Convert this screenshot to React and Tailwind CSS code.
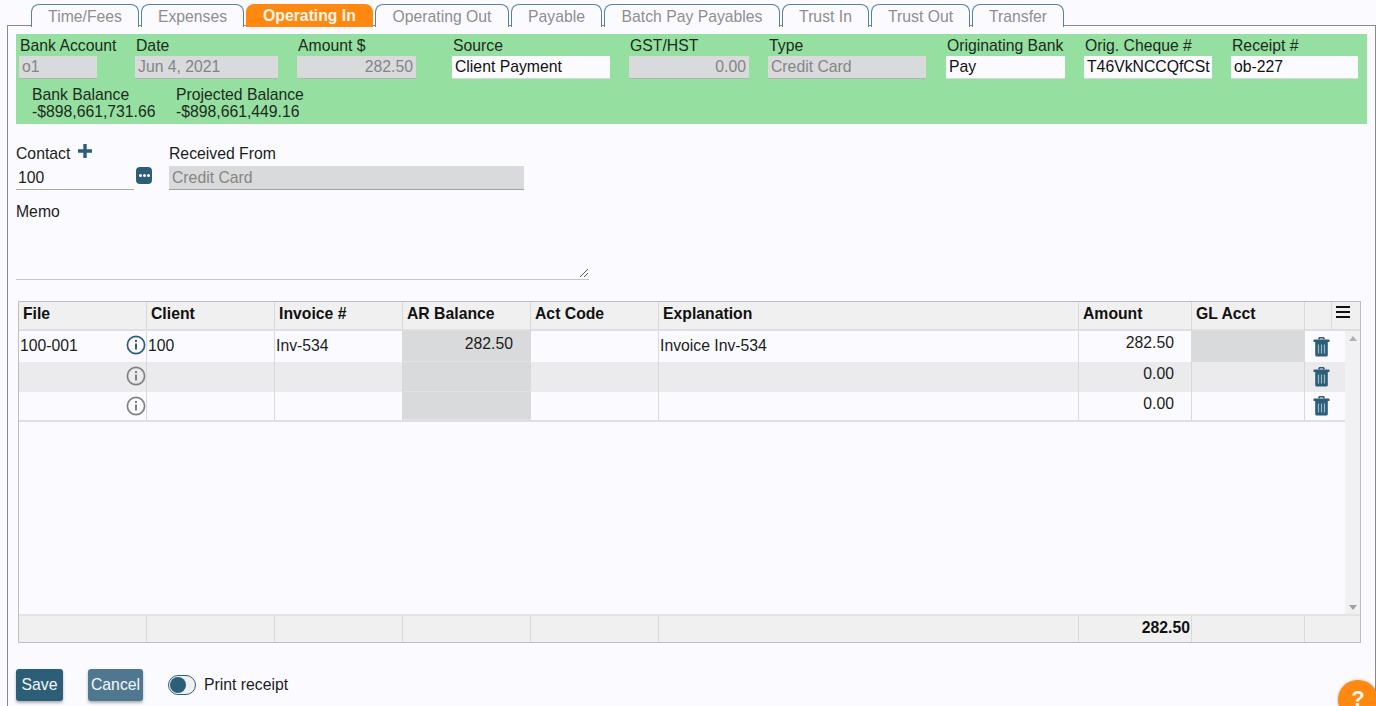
import React from "react";

const tabs = [
  ["Time/Fees", "w-[108px]"],
  ["Expenses", "w-[103px]"],
  ["Operating In", "w-[127px]"],
  ["Operating Out", "w-[134px]"],
  ["Payable", "w-[91px]"],
  ["Batch Pay Payables", "w-[176px]"],
  ["Trust In", "w-[87px]"],
  ["Trust Out", "w-[99px]"],
  ["Transfer", "w-[92px]"],
];

function Field({ label, value, wClass, mlClass, disabled, right }) {
  return (
    <div className={`flex flex-col shrink-0 ${wClass} ${mlClass}`}>
      <div className="h-[21px] pl-px text-[15.75px] leading-[21px] text-[#1c2b20] whitespace-nowrap">{label}</div>
      <div
        className={`h-[23px] pl-[3px] pr-[3px] text-[15.75px] leading-[22px] overflow-hidden whitespace-nowrap ${
          disabled
            ? "bg-[#d9dadb] text-[#858585] border-b border-[#b4b4b4]"
            : "bg-[#fbfbff] text-[#111] border-b border-[#d8d8d8]"
        } ${right ? "text-right" : ""}`}
      >
        {value}
      </div>
    </div>
  );
}

function InfoIcon({ active }) {
  return (
    <svg width="20" height="20" viewBox="0 0 20 20" fill="none" stroke={active ? "#2c5e78" : "#808080"} strokeWidth="1.7">
      <circle cx="10" cy="10" r="8.6" />
      <path d="M10 8.6v6" strokeWidth="2" />
      <path d="M10 5v2" strokeWidth="2" />
    </svg>
  );
}

function Trash() {
  return (
    <svg width="17" height="20" viewBox="0 0 17 20" fill="none">
      <path d="M5.8 2.4 6.5 .8h4l.7 1.6" stroke="#2c5e78" strokeWidth="1.6" />
      <rect x=".5" y="2.4" width="16" height="2.6" rx=".6" fill="#2c5e78" />
      <path d="M2.2 5h12.6v13a1.6 1.6 0 0 1-1.6 1.6H3.800a1.600 1.600 0 0 1-1.600-1.600z" fill="#2c5e78" />
      <path d="M5.500 7.500v9M8.500 7.500v9M11.500 7.500v9" stroke="#9fb8c6" strokeWidth="1.200" />
    </svg>
  );
}

const cols = "grid grid-cols-[128px_128px_128px_128px_128px_420px_113px_113px_1fr]";
const cellB = "border-r border-[#d9d9d9]";

function Row({ file, client, invoice, ar, expl, amount, glGray, alt, active }) {
  const bg = alt ? "bg-[#ebebee]" : "bg-[#fbfbff]";
  return (
    <div className={`${cols} ${bg} text-[15.75px] text-[#1c1c1c]`}>
      <div className={`${cellB} relative pl-px flex items-center h-full`}>
        <span className="-mt-[2px]">{file}</span>
        <span className="absolute right-[0px] top-[4px] flex"><InfoIcon active={active} /></span>
      </div>
      <div className={`${cellB} pl-px flex items-center`}><span className="-mt-[2px]">{client}</span></div>
      <div className={`${cellB} pl-px flex items-center`}><span className="-mt-[2px]">{invoice}</span></div>
      <div className={`${cellB} border-b border-b-[#e2e2e4] bg-[#d9dadb] text-right pr-[17px] leading-[26px]`}>{ar}</div>
      <div className={`${cellB}`} />
      <div className={`${cellB} pl-px flex items-center`}><span className="-mt-[2px]">{expl}</span></div>
      <div className={`${cellB} text-right pr-[17px] leading-[24px]`}>{amount}</div>
      <div className={`${cellB} ${glGray ? "bg-[#d9dadb]" : ""}`} />
      <div className="flex items-center pl-[8px]"><Trash /></div>
    </div>
  );
}

export default function App() {
  return (
    <div className="relative h-[706px] w-[1376px] overflow-hidden bg-[#fbfbff] font-['Liberation_Sans',Arial,sans-serif]">
      <div className="relative z-10 flex gap-[2px] pl-[31px] pt-[4px] h-[26px]">
        {tabs.map(([t, w]) =>
          t === "Operating In" ? (
            <div key={t} className={`${w} h-[23px] rounded-t-[8px] bg-[#ff8811] text-center text-[15.75px] font-bold leading-[24px] text-[#fdf6ea]`}>{t}</div>
          ) : (
            <div key={t} className={`${w} h-[23px] rounded-t-[8px] border border-b-0 border-[#5b8199] bg-[#fbfbff] text-center text-[15.75px] leading-[23px] text-[#8e8e8e]`}>{t}</div>
          )
        )}
      </div>
      <div className="ml-[7px] -mt-[1px] h-[690px] border-l border-t border-r border-[#8a8a8a] pl-[8px] pr-[7px] pt-[8px]">
        <div className="h-[90px] w-[1351px] bg-[#95e0a0]">
          <div className="flex pl-[2px] pt-[1px]">
            <Field label="Bank Account" value="o1" wClass="w-[78px]" mlClass="ml-px" disabled />
            <Field label="Date" value="Jun 4, 2021" wClass="w-[143px]" mlClass="ml-[38px]" disabled />
            <Field label="Amount $" value="282.50" wClass="w-[119px]" mlClass="ml-[19px]" disabled right />
            <Field label="Source" value="Client Payment" wClass="w-[158px]" mlClass="ml-[36px]" />
            <Field label="GST/HST" value="0.00" wClass="w-[120px]" mlClass="ml-[19px]" disabled right />
            <Field label="Type" value="Credit Card" wClass="w-[158px]" mlClass="ml-[19px]" disabled />
            <Field label="Originating Bank" value="Pay" wClass="w-[119px]" mlClass="ml-[20px]" />
            <Field label="Orig. Cheque #" value="T46VkNCCQfCSt" wClass="w-[128px]" mlClass="ml-[19px]" />
            <Field label="Receipt #" value="ob-227" wClass="w-[127px]" mlClass="ml-[19px]" />
          </div>
          <div className="flex pl-[16px] pt-[7px] text-[15.75px] leading-[17px] text-[#1c2b20]">
            <div className="w-[144px]"><div>Bank Balance</div><div>-$898,661,731.66</div></div>
            <div><div>Projected Balance</div><div>-$898,661,449.16</div></div>
          </div>
        </div>

        <div className="flex mt-[19px]">
          <div className="w-[118px]">
            <div className="flex items-center h-[21px] text-[15.75px] text-[#1c1c1c]">
              Contact
              <svg className="ml-[8px] -mt-[5px]" width="14" height="14" viewBox="0 0 14 14"><path d="M7 0v14M0 7h14" stroke="#2c5e78" strokeWidth="3.4" /></svg>
            </div>
            <div className="h-[26px] border-b border-[#a8a8a8] pl-[2px] text-[15.75px] leading-[28px] text-[#1c1c1c]">100</div>
          </div>
          <div className="ml-[2px] mt-[24px] flex h-[17px] w-[16px] items-center justify-center gap-[1px] rounded-[4px] bg-[#2c5e78]">
            <span className="h-[3px] w-[3px] rounded-full bg-white" /><span className="h-[3px] w-[3px] rounded-full bg-white" /><span className="h-[3px] w-[3px] rounded-full bg-white" />
          </div>
          <div className="ml-[17px] w-[355px]">
            <div className="h-[21px] text-[15.75px] leading-[21px] text-[#1c1c1c]">Received From</div>
            <div className="mt-[2px] h-[24px] border-b border-[#a0a0a0] bg-[#d9dadb] pl-[3px] text-[15.75px] leading-[23px] text-[#858585]">Credit Card</div>
          </div>
        </div>

        <div className="mt-[12px] relative h-[78px] w-[573px] border-b border-[#c8c8c8] text-[15.75px] leading-[20px] text-[#1c1c1c]">
          Memo
          <svg className="absolute bottom-[1px] right-0" width="10" height="10" viewBox="0 0 10 10"><path d="M1 9 9 1M5 9 9 5" stroke="#555" strokeWidth="1" /></svg>
        </div>

        <div className="mt-[21px] ml-[2px] w-[1343px] border border-[#bdbdbd]">
          <div className={`${cols} h-[29px] bg-[#f0f0f0] border-b-2 border-[#dfdfdf] text-[15.75px] font-bold leading-[24px] text-[#111]`}>
            {["File", "Client", "Invoice #", "AR Balance", "Act Code", "Explanation", "Amount", "GL Acct"].map((h) => (
              <div key={h} className={`${cellB} pl-[4px]`}>{h}</div>
            ))}
            <div className="flex">
              <div className={`${cellB} w-[27px] -mr-px`} />
              <div className="ml-[5px] mt-[4px] flex flex-col gap-[3px]">
                <span className="block h-[2px] w-[14px] bg-[#111]" /><span className="block h-[2px] w-[14px] bg-[#111]" /><span className="block h-[2px] w-[14px] bg-[#111]" />
              </div>
            </div>
          </div>
          <div className="flex h-[285px] border-b-2 border-[#e4e4e4]">
            <div className="flex-1">
              <div className="grid grid-rows-[31px_30px_28px] border-b-2 border-[#dfdfdf]">
                <Row file="100-001" client="100" invoice="Inv-534" ar="282.50" expl="Invoice Inv-534" amount="282.50" glGray active />
                <Row amount="0.00" alt />
                <Row amount="0.00" />
              </div>
            </div>
            <div className="relative w-[15px] bg-[#f1f1f3]">
              <span className="absolute left-[4px] top-[5px] h-0 w-0 border-x-[4px] border-b-[5px] border-x-transparent border-b-[#b0b0b0]" />
              <span className="absolute left-[4px] bottom-[4px] h-0 w-0 border-x-[4px] border-t-[5px] border-x-transparent border-t-[#a0a0a0]" />
            </div>
          </div>
          <div className={`${cols} h-[26px] bg-[#f0f0f0] text-[15.75px] font-bold leading-[24px] text-[#111]`}>
            <div className={cellB} /><div className={cellB} /><div className={cellB} /><div className={cellB} /><div className={cellB} /><div className={cellB} />
            <div className={`${cellB} text-right pr-[1px]`}>282.50</div>
            <div className={cellB} />
            <div />
          </div>
        </div>

        <div className="mt-[26px] ml-0 flex items-center">
          <div className="flex h-[32px] w-[47px] items-center justify-center rounded-[3px] bg-[#2c5e78] text-[15.75px] text-[#f4f8fa] shadow-[0_2px_3px_rgba(0,0,0,0.3)]">Save</div>
          <div className="ml-[25px] flex h-[32px] w-[55px] items-center justify-center rounded-[3px] bg-[#4f7890] text-[15.75px] text-[#f4f8fa] shadow-[0_2px_3px_rgba(0,0,0,0.3)]">Cancel</div>
          <div className="ml-[25px] flex h-[20px] w-[28px] items-center rounded-full border border-[#2c5e78] bg-[#f0f0f2] pl-px">
            <span className="h-[16px] w-[16px] rounded-full bg-[#2c5e78]" />
          </div>
          <div className="ml-[8px] -mt-[1px] text-[15.75px] text-[#1c1c1c]">Print receipt</div>
        </div>
      </div>
      <div className="absolute left-[1338px] top-[680px] flex h-[40px] w-[40px] justify-center rounded-full bg-[#ff8811] pt-[5px] text-[22px] font-bold leading-[28px] text-[#fdf6ea] shadow-[0_0_3px_rgba(0,0,0,0.3)]">?</div>
    </div>
  );
}
